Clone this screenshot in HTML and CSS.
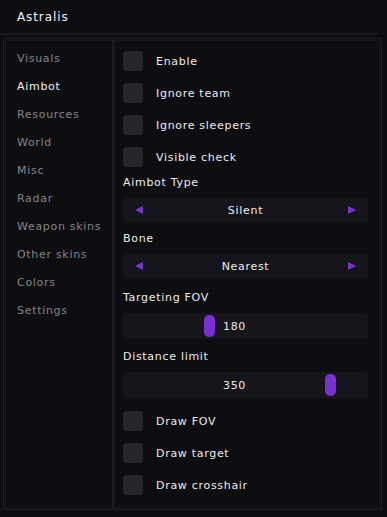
FILE: index.html
```html
<!DOCTYPE html>
<html>
<head>
<meta charset="utf-8">
<link rel="stylesheet" href="styles.css">
</head>
<body>
<div class="window">
  <div class="titlebar">Astralis</div>
  <div class="panel">
    <div class="panel-inner">
      <nav class="sidebar">
        <div class="tab">Visuals</div>
        <div class="tab active">Aimbot</div>
        <div class="tab">Resources</div>
        <div class="tab">World</div>
        <div class="tab">Misc</div>
        <div class="tab">Radar</div>
        <div class="tab">Weapon skins</div>
        <div class="tab">Other skins</div>
        <div class="tab">Colors</div>
        <div class="tab">Settings</div>
      </nav>
      <main class="content">
        <div class="check"><span class="box"></span><span>Enable</span></div>
        <div class="check"><span class="box"></span><span>Ignore team</span></div>
        <div class="check"><span class="box"></span><span>Ignore sleepers</span></div>
        <div class="check last"><span class="box"></span><span>Visible check</span></div>

        <div class="label">Aimbot Type</div>
        <div class="combo"><span class="arrow left"></span><span class="val">Silent</span><span class="arrow right"></span></div>

        <div class="label">Bone</div>
        <div class="combo"><span class="arrow left"></span><span class="val">Nearest</span><span class="arrow right"></span></div>

        <div class="label slabel gap-lg">Targeting FOV</div>
        <div class="slider"><span class="handle" style="left: 81px"></span><span class="sval">180</span></div>

        <div class="label slabel">Distance limit</div>
        <div class="slider"><span class="handle" style="left: 202px"></span><span class="sval">350</span></div>

        <div class="check first-after"><span class="box"></span><span>Draw FOV</span></div>
        <div class="check"><span class="box"></span><span>Draw target</span></div>
        <div class="check"><span class="box"></span><span>Draw crosshair</span></div>
      </main>
    </div>
  </div>
</div>
</body>
</html>
```
FILE: styles.css
```css
* { box-sizing: border-box; }
html, body {
  margin: 0;
  padding: 0;
  background: #0e0d12;
}
body {
  width: 387px;
  height: 517px;
  overflow: hidden;
  font-family: "DejaVu Sans", sans-serif;
  font-size: 11px;
  letter-spacing: 0.7px;
  color: #ececec;
}
.window {
  width: 387px;
  height: 517px;
  display: flex;
  flex-direction: column;
}
.titlebar {
  flex: none;
  height: 35px;
  padding: 0 0 1px 17px;
  margin: 0 10px 0 0;
  line-height: 34px;
  font-size: 12px;
  letter-spacing: 0.9px;
  color: #f2f2f2;
  border-bottom: 2px solid #1b1a20;
}
.panel {
  margin: 3px 5px 7px 3px;
  flex: 1;
  min-height: 0;
  border: 1px solid #1f1e25;
  padding: 1px;
  overflow: hidden;
}
.panel-inner {
  height: 100%;
  border: 1px solid #1a1920;
  display: flex;
  overflow: hidden;
}
.sidebar {
  width: 107px;
  flex: none;
  border-right: 1px solid #201f26;
  box-shadow: 2px 0 0 #17161c;
  padding: 10px 0 0 11px;
  display: flex;
  flex-direction: column;
}
.tab {
  height: 28px;
  line-height: 16px;
  color: #858488;
}
.tab.active { color: #f2f2f2; }
.content {
  flex: 1;
  padding: 10px 9px 0 10px;
  display: flex;
  flex-direction: column;
}
.check {
  display: flex;
  align-items: center;
  height: 20px;
  margin-bottom: 12px;
  gap: 13px;
  flex: none;
}
.check.last { margin-bottom: 8px; }
.check.first-after { margin-top: 3px; }
.box {
  width: 20px;
  height: 20px;
  border-radius: 4px;
  background: #26252b;
  flex: none;
}
.label {
  height: 16px;
  line-height: 16px;
  margin-bottom: 7px;
  color: #ececec;
  flex: none;
}
.label.gap-lg { margin-top: 3px; }
.label.slabel { margin-bottom: 7px; }
.combo {
  position: relative;
  height: 24px;
  width: 245px;
  background: #16151b;
  border-radius: 3px;
  display: flex;
  align-items: center;
  padding: 0 12px;
  margin-bottom: 9px;
  flex: none;
}
.combo .val {
  flex: 1;
  text-align: center;
}
.arrow {
  width: 0;
  height: 0;
  border-top: 4.5px solid transparent;
  border-bottom: 4.5px solid transparent;
}
.arrow.left { border-right: 8px solid #7d32d6; }
.arrow.right { border-left: 8px solid #7d32d6; }
.slider {
  position: relative;
  height: 26px;
  width: 245px;
  background: #16151b;
  border-radius: 3px;
  display: flex;
  align-items: center;
  justify-content: center;
  padding-right: 22px;
  margin-bottom: 10px;
  flex: none;
}
.handle {
  position: absolute;
  top: 2px;
  width: 11px;
  height: 22px;
  border-radius: 5px;
  background: #7a2fd4;
}
.sval {
  position: relative;
}
```
